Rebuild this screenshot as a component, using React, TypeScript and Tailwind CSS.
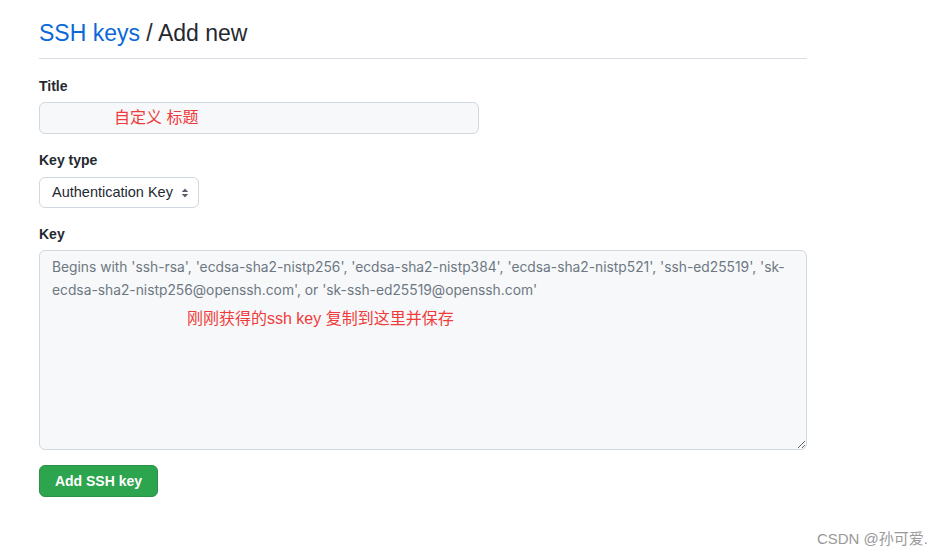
import React from "react";

/* ── SSH key form ─────────────────────────────────── */

const placeholder =
  "Begins with 'ssh-rsa', 'ecdsa-sha2-nistp256', 'ecdsa-sha2-nistp384', 'ecdsa-sha2-nistp521', 'ssh-ed25519', 'sk-ecdsa-sha2-nistp256@openssh.com', or 'sk-ssh-ed25519@openssh.com'";

function SelectArrows() {
  return (
    <svg width="8" height="12" viewBox="0 0 8 12" className="text-[#57606a]">
      <path d="M4 1.5 7.2 5H.8z" fill="currentColor" />
      <path d="M4 10.5 7.2 7H.8z" fill="currentColor" />
    </svg>
  );
}

export default function App() {
  return (
    <div
      className="relative h-[557px] w-[943px] bg-white text-[#24292f]"
      style={{ fontFamily: '"Liberation Sans", "Noto Sans CJK SC", sans-serif' }}
    >
      <div className="w-[768px] pl-[39px] pt-[18px] box-content">
        <h2 className="border-b border-[#d8dee4] pb-[10px] text-[23px] leading-[30px]">
          <a className="text-[#0969da]">SSH keys</a> / Add new
        </h2>

        <div className="mt-[17px]">
          <label className="block text-[14px] font-bold leading-[20px]">Title</label>
          <div className="relative mt-[6px] h-[32px] w-[440px] rounded-[6px] border border-[#d0d7de] bg-[#f6f8fa]">
            <span className="absolute left-[74px] top-[4px] text-[16px] leading-[22px] text-[#f03b3b]">
              自定义 标题
            </span>
          </div>
        </div>

        <div className="mt-[16px]">
          <label className="block text-[14px] font-bold leading-[20px]">Key type</label>
          <div className="mt-[7px] flex h-[31px] w-[160px] items-center justify-between rounded-[6px] border border-[#d0d7de] bg-white pl-[12px] pr-[9px] text-[14.5px]">
            <span>Authentication Key</span>
            <SelectArrows />
          </div>
        </div>

        <div className="mt-[16px]">
          <label className="block text-[14px] font-bold leading-[20px]">Key</label>
          <div className="relative mt-[6px]">
            <textarea
              placeholder={placeholder}
              style={{ fontFamily: "Inter, sans-serif" }}
              className="block h-[200px] w-[768px] resize-y rounded-[6px] border border-[#d0d7de] bg-[#f6f8fa] px-[12px] pt-[5px] text-[13.8px] leading-[23px] outline-none placeholder:text-[#6e7781]"
            />
            <span className="pointer-events-none absolute left-[148px] top-[58px] text-[16px] leading-[22px] text-[#f03b3b]">
              刚刚获得的ssh key 复制到这里并保存
            </span>
          </div>
        </div>

        <button className="mt-[15px] h-[32px] w-[119px] rounded-[6px] border border-[#2a9147] bg-[#2da44e] text-[14px] font-bold text-white">
          Add SSH key
        </button>
      </div>

      <span className="absolute bottom-[7px] right-[15px] text-[15px] text-[#999999]">
        CSDN @孙可爱.
      </span>
    </div>
  );
}
